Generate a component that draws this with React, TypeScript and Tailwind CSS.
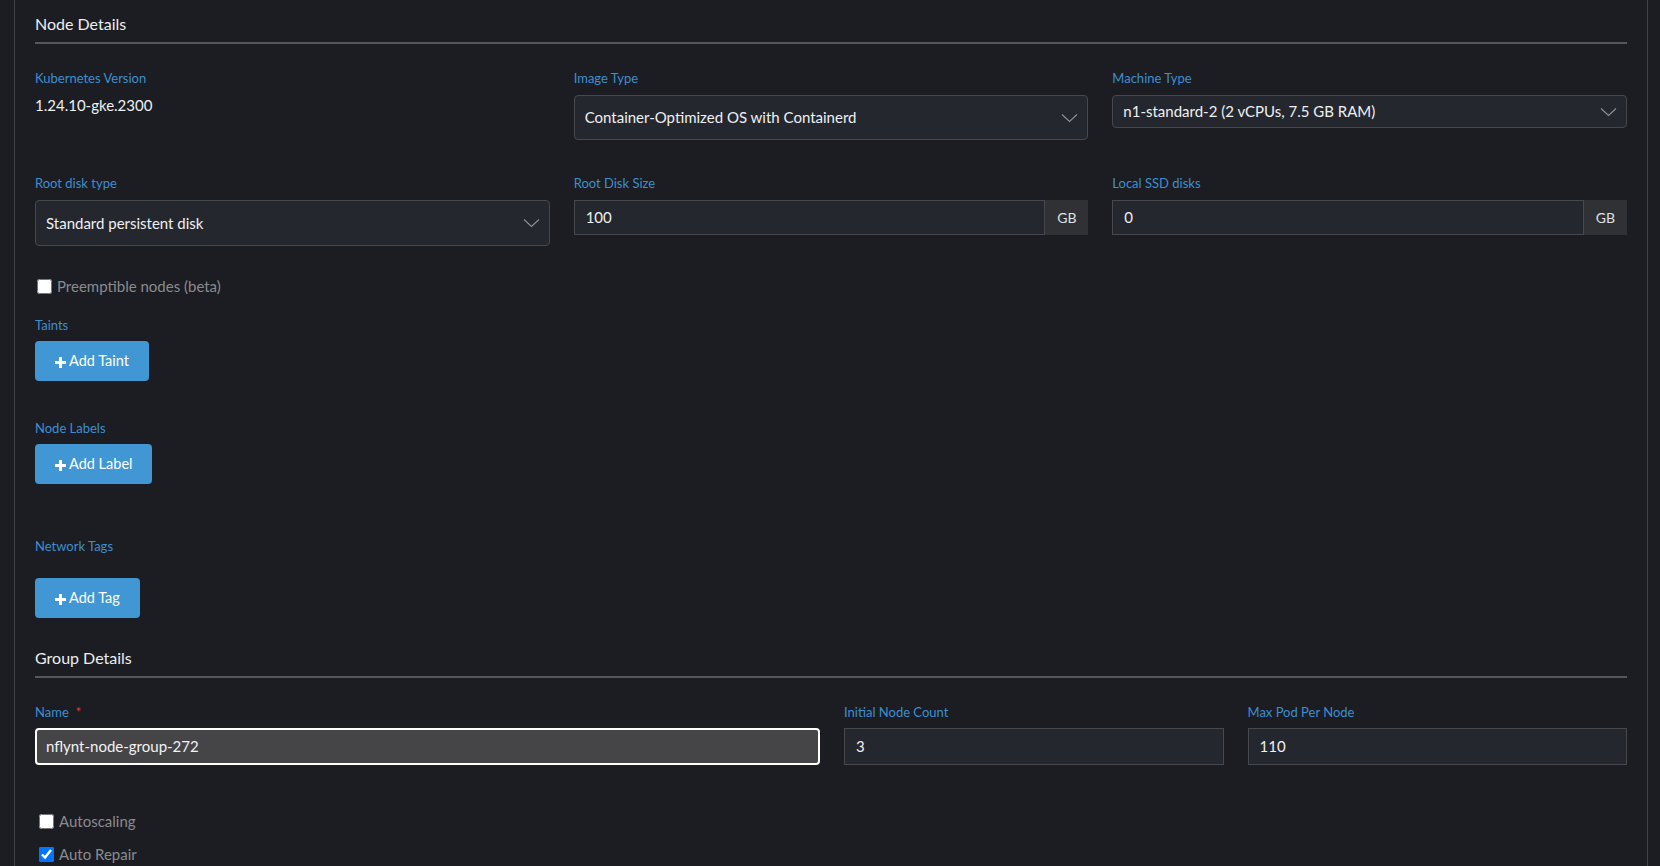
import type { ReactNode } from "react";

const font = { fontFamily: "Lato, 'Open Sans', sans-serif" };

function Label({ children, required }: { children: ReactNode; required?: boolean }) {
  return (
    <div className="text-[13px] leading-[18px] text-[#3d8fd0]">
      {children}
      {required && <span className="ml-[7px] text-[#e03b3b]">*</span>}
    </div>
  );
}

function Chevron() {
  return (
    <svg width="17" height="10" viewBox="0 0 17 10" fill="none" className="shrink-0">
      <path d="M1 1.5 8.5 8.5 16 1.5" stroke="#909196" strokeWidth="1.1" />
    </svg>
  );
}

function Select({ value, height }: { value: string; height: string }) {
  return (
    <div
      className={`mt-2 flex ${height} items-center justify-between rounded-[4px] border border-[#46484e] bg-[#25272e] pl-[10px] pr-[9px] text-[15px] text-[#eef0f3]`}
    >
      <span>{value}</span>
      <Chevron />
    </div>
  );
}

function UnitInput({ value }: { value: string }) {
  return (
    <div className="mt-2 flex h-[35px]">
      <div className="flex flex-1 items-center border border-[#46484e] bg-[#25272e] pl-[11px] text-[15px] text-[#eef0f3]">
        {value}
      </div>
      <div className="flex w-[43px] items-center justify-center bg-[#303135] text-[14px] text-[#dfe1e4]">
        GB
      </div>
    </div>
  );
}

function TextInput({ value, focused }: { value: string; focused?: boolean }) {
  return (
    <div
      className={
        focused
          ? "mt-[7px] flex h-[37px] items-center rounded-[4px] border-2 border-white bg-[#454548] pl-[9px] text-[15px] text-[#f2f2f4]"
          : "mt-[7px] flex h-[37px] items-center border border-[#46484e] bg-[#25272e] pl-[11px] text-[15px] text-[#eef0f3]"
      }
    >
      {value}
    </div>
  );
}

function AddButton({ label }: { label: string }) {
  return (
    <button
      type="button"
      className="flex h-10 items-center rounded-[4px] bg-[#4197d3] px-[20px] text-[14.5px] text-white"
    >
      <svg width="11" height="11" viewBox="0 0 11 11" className="mr-[3px] mt-[2px]">
        <path d="M4 0h3v4h4v3H7v4H4V7H0V4h4z" fill="#fff" />
      </svg>
      {label}
    </button>
  );
}

function Check({ label, checked }: { label: string; checked?: boolean }) {
  return (
    <label className="flex h-5 items-center text-[15px] text-[#8a8b90]">
      <input
        type="checkbox"
        defaultChecked={checked}
        className="m-0 mr-[5px] h-[15px] w-[15px]"
      />
      {label}
    </label>
  );
}

function SectionTitle({ children }: { children: ReactNode }) {
  return (
    <div className="border-b-2 border-[#56575c] pb-[6px] text-[16px] leading-6 text-[#eceef1]">
      {children}
    </div>
  );
}

export default function App() {
  return (
    <div className="min-h-screen bg-[#1c1d22] pl-[14px] pr-[12px]" style={font}>
      <div className="min-h-[866px] border-x border-[#3f4046] px-5 pt-[12px]">
        <SectionTitle>Node Details</SectionTitle>

        <div className="mt-[25px] grid grid-cols-3 gap-x-6">
          <div>
            <Label>Kubernetes Version</Label>
            <div className="mt-[7px] text-[15px] leading-[22px] text-[#eef0f3]">1.24.10-gke.2300</div>
          </div>
          <div>
            <Label>Image Type</Label>
            <Select value="Container-Optimized OS with Containerd" height="h-[45px]" />
          </div>
          <div>
            <Label>Machine Type</Label>
            <Select value="n1-standard-2 (2 vCPUs, 7.5 GB RAM)" height="h-[33px]" />
          </div>
        </div>

        <div className="mt-[34px] grid grid-cols-3 gap-x-6">
          <div>
            <Label>Root disk type</Label>
            <Select value="Standard persistent disk" height="h-[46px]" />
          </div>
          <div>
            <Label>Root Disk Size</Label>
            <UnitInput value="100" />
          </div>
          <div>
            <Label>Local SSD disks</Label>
            <UnitInput value="0" />
          </div>
        </div>

        <div className="mt-[30px] pl-[2px]">
          <Check label="Preemptible nodes (beta)" />
        </div>

        <div className="mt-[20px]">
          <Label>Taints</Label>
          <div className="mt-[7px] flex">
            <AddButton label="Add Taint" />
          </div>
        </div>

        <div className="mt-[38px]">
          <Label>Node Labels</Label>
          <div className="mt-[7px] flex">
            <AddButton label="Add Label" />
          </div>
        </div>

        <div className="mt-[53px]">
          <Label>Network Tags</Label>
          <div className="mt-[23px] flex">
            <AddButton label="Add Tag" />
          </div>
        </div>

        <div className="mt-[28px]">
          <SectionTitle>Group Details</SectionTitle>
        </div>

        <div className="mt-[25px] grid grid-cols-[785px_1fr_1fr] gap-x-6">
          <div>
            <Label required>Name</Label>
            <TextInput value="nflynt-node-group-272" focused />
          </div>
          <div>
            <Label>Initial Node Count</Label>
            <TextInput value="3" />
          </div>
          <div>
            <Label>Max Pod Per Node</Label>
            <TextInput value="110" />
          </div>
        </div>

        <div className="mt-[46px] pl-[4px]">
          <Check label="Autoscaling" />
        </div>
        <div className="mt-[13px] pl-[4px]">
          <Check label="Auto Repair" checked />
        </div>
      </div>
    </div>
  );
}
